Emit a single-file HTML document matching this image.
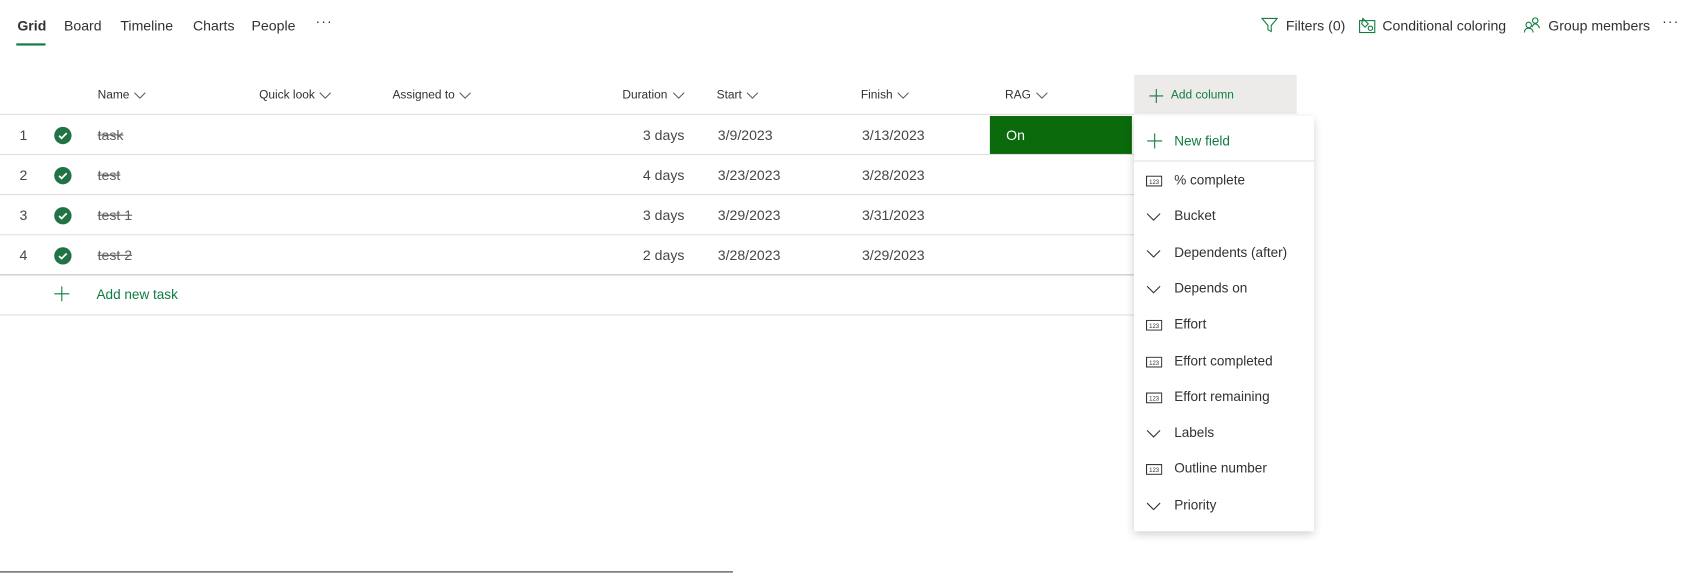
<html><head><style>
body{margin:0;width:1700px;height:575px;background:#fff;font-family:"Liberation Sans",sans-serif;color:#323130;position:relative;overflow:hidden}
#w{position:absolute;left:0;top:0;width:1568px;height:531px;transform:scale(1.0842);transform-origin:0 0}
.a{position:absolute;white-space:nowrap}
.t{font-size:13px;top:16px}
.h{font-size:11px;top:82px;color:#323130}
.chev{vertical-align:middle;margin-left:4px}
.row{position:absolute;left:0;width:1046px;height:36px;border-bottom:1px solid #e1dfdd;font-size:13px;color:#484644}
.row .a{top:11px}
.ck{position:absolute;left:50px;top:11px;width:16px;height:16px;border-radius:50%;background:#217346}
.s{text-decoration:line-through;color:#605e5c}
.mi{position:absolute;left:1046px;width:166px;height:33px;font-size:12.5px}
.mi span{position:absolute;left:37px;top:9px}
.mi svg{position:absolute;left:11px;top:11px}
</style></head><body><div id="w">
<div class="a t" style="left:16px;font-weight:bold">Grid</div>
<div class="a" style="left:15px;top:40px;width:27px;height:2px;background:#107c41"></div>
<div class="a t" style="left:59px">Board</div>
<div class="a t" style="left:111px">Timeline</div>
<div class="a t" style="left:178px">Charts</div>
<div class="a t" style="left:232px">People</div>
<div class="a t" style="left:291px;top:12px;letter-spacing:1px">···</div>
<svg class="a" style="left:1163px;top:15px" width="16" height="16" viewBox="0 0 16 16"><path d="M1 2h14l-5.5 6.5V14l-3-1.5V8.5z" fill="none" stroke="#107c41"/></svg>
<div class="a t" style="left:1186px">Filters (0)</div>
<svg class="a" style="left:1253px;top:15px" width="16" height="16" viewBox="0 0 16 16"><rect x="1" y="4" width="14" height="11" fill="none" stroke="#107c41"/><path d="M4 2l5 5-3 3-3-3z" fill="none" stroke="#107c41"/><circle cx="11" cy="11" r="2" fill="none" stroke="#107c41"/></svg>
<div class="a t" style="left:1275px">Conditional coloring</div>
<svg class="a" style="left:1405px;top:15px" width="16" height="16" viewBox="0 0 16 16"><circle cx="5" cy="8" r="2.5" fill="none" stroke="#107c41"/><circle cx="11" cy="4" r="2.5" fill="none" stroke="#107c41"/><path d="M1 15c0-3 2-4 4-4s4 1 4 4M8 10c1-2 2-3 3-3s3 1 4 4" fill="none" stroke="#107c41"/></svg>
<div class="a t" style="left:1428px">Group members</div>
<div class="a t" style="left:1533px;top:12px;letter-spacing:1px">···</div>

<svg width="0" height="0" style="position:absolute"><symbol id="c" viewBox="0 0 12 8"><path d="M1 1.5l5 5 5-5" fill="none" stroke="#605e5c"/></symbol><symbol id="k" viewBox="0 0 16 16"><path d="M4.5 8.2l2.3 2.3 4.7-4.7" fill="none" stroke="#fff" stroke-width="1.6"/></symbol></svg>
<div class="a h" style="left:90px">Name<svg class="chev" width="12" height="8"><use href="#c"/></svg></div>
<div class="a h" style="left:239px">Quick look<svg class="chev" width="12" height="8"><use href="#c"/></svg></div>
<div class="a h" style="left:362px">Assigned to<svg class="chev" width="12" height="8"><use href="#c"/></svg></div>
<div class="a h" style="left:574px">Duration<svg class="chev" width="12" height="8"><use href="#c"/></svg></div>
<div class="a h" style="left:661px">Start<svg class="chev" width="12" height="8"><use href="#c"/></svg></div>
<div class="a h" style="left:794px">Finish<svg class="chev" width="12" height="8"><use href="#c"/></svg></div>
<div class="a h" style="left:927px">RAG<svg class="chev" width="12" height="8"><use href="#c"/></svg></div>
<div class="a" style="left:1046px;top:69px;width:150px;height:36px;background:#edebe9"></div>
<svg class="a" style="left:1060px;top:82px" width="13" height="13"><path d="M6.5 0v13M0 6.5h13" stroke="#107c41"/></svg>
<div class="a h" style="left:1080px;color:#107c41">Add column</div>
<div class="a" style="left:0;top:105px;width:1046px;height:1px;background:#e1dfdd"></div>

<div class="row" style="top:106px"><div class="a" style="left:18px">1</div><div class="ck"><svg width="16" height="16"><use href="#k"/></svg></div><div class="a s" style="left:90px">task</div><div class="a" style="left:593px">3 days</div><div class="a" style="left:662px">3/9/2023</div><div class="a" style="left:795px">3/13/2023</div><div class="a" style="left:913px;top:1px;width:131px;height:35px;background:#0b6a0b"></div><div class="a" style="left:928px;color:#fff">On</div></div>
<div class="row" style="top:143px"><div class="a" style="left:18px">2</div><div class="ck"><svg width="16" height="16"><use href="#k"/></svg></div><div class="a s" style="left:90px">test</div><div class="a" style="left:593px">4 days</div><div class="a" style="left:662px">3/23/2023</div><div class="a" style="left:795px">3/28/2023</div></div>
<div class="row" style="top:180px"><div class="a" style="left:18px">3</div><div class="ck"><svg width="16" height="16"><use href="#k"/></svg></div><div class="a s" style="left:90px">test 1</div><div class="a" style="left:593px">3 days</div><div class="a" style="left:662px">3/29/2023</div><div class="a" style="left:795px">3/31/2023</div></div>
<div class="row" style="top:217px"><div class="a" style="left:18px">4</div><div class="ck"><svg width="16" height="16"><use href="#k"/></svg></div><div class="a s" style="left:90px">test 2</div><div class="a" style="left:593px">2 days</div><div class="a" style="left:662px">3/28/2023</div><div class="a" style="left:795px">3/29/2023</div></div>
<div class="a" style="left:0;top:253px;width:1046px;height:1px;background:#c8c6c4"></div>
<div class="row" style="top:254px"><svg class="a" style="left:50px;top:10px" width="14" height="14"><path d="M7 0v14M0 7h14" stroke="#107c41"/></svg><div class="a" style="left:89px;color:#107c41;font-size:12.5px">Add new task</div></div>

<div class="a" style="left:1046px;top:107px;width:166px;height:383px;background:#fff;box-shadow:0 3px 8px rgba(0,0,0,.2)"></div>
<div class="mi" style="top:114px;color:#107c41"><svg width="14" height="14" style="left:12px;top:9px"><path d="M7 0v14M0 7h14" stroke="#107c41"/></svg><span>New field</span></div>
<div class="a" style="left:1046px;top:148px;width:166px;height:1px;background:#e1dfdd"></div>
<div id="m"></div>
<div class="a" style="left:0;top:527px;width:676px;height:1px;background:#333"></div>
</div>
<script>
var L=[["% complete",0],["Bucket",1],["Dependents (after)",1],["Depends on",1],["Effort",0],["Effort completed",0],["Effort remaining",0],["Labels",1],["Outline number",0],["Priority",1]],h="";
L.forEach(function(x,i){var ic=x[1]?'<svg width="14" height="9" style="top:13px"><path d="M1 1l6 6 6-6" fill="none" stroke="#323130"/></svg>':'<svg width="15" height="10" style="top:12px"><rect x=".5" y=".5" width="14" height="9" fill="none" stroke="#323130"/><text x="7.5" y="7.5" font-size="5.5" text-anchor="middle" fill="#323130" font-family="Liberation Sans">123</text></svg>';
h+='<div class="mi" style="top:'+(150+i*33.3)+'px">'+ic+'<span>'+x[0]+'</span></div>';});
document.getElementById("m").innerHTML=h;
</script>
</body></html>
